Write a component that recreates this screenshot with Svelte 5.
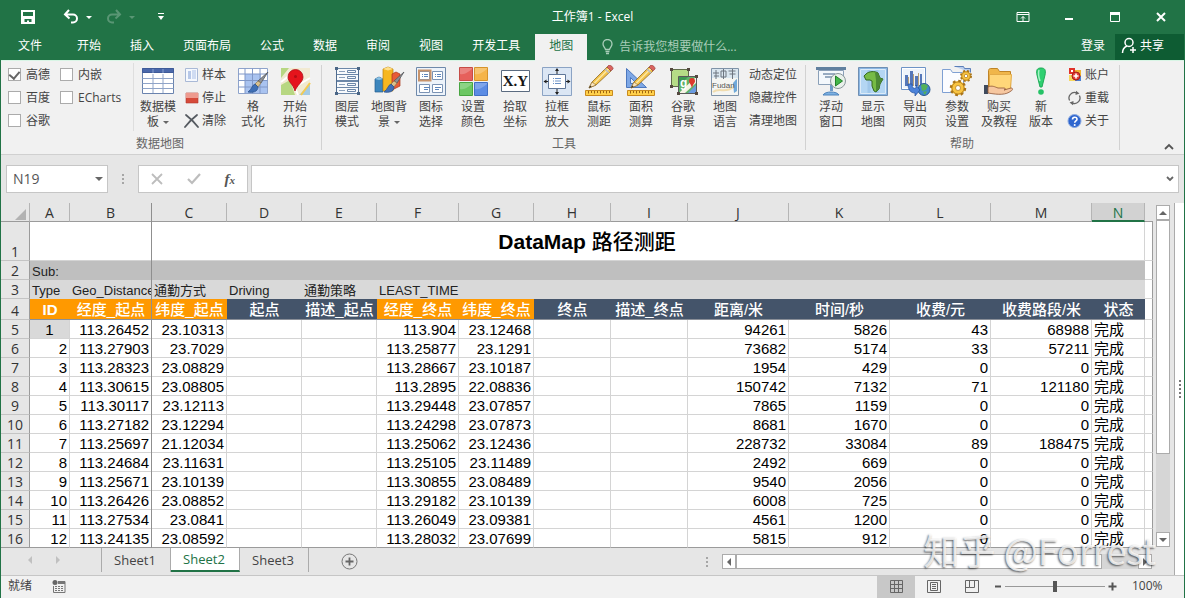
<script>
  const tabs = ['开始', '插入', '页面布局', '公式', '数据', '审阅', '视图', '开发工具', '地图'];
  let activeTab = $state('地图');
  let activeSheet = $state('Sheet2');
  let zoom = $state(100);

  const providers = [
    { name: '高德', on: true },
    { name: '内嵌', on: false },
    { name: '百度', on: false },
    { name: 'ECharts', on: false },
    { name: '谷歌', on: false }
  ];

  const toolButtons = [
    { icon: 'layers', lines: ['图层', '模式'] },
    { icon: 'chartBrush', lines: ['地图背', '景'], menu: true },
    { icon: 'iconPick', lines: ['图标', '选择'] },
    { icon: 'colors', lines: ['设置', '颜色'] },
    { icon: 'xy', lines: ['拾取', '坐标'] },
    { icon: 'frame', lines: ['拉框', '放大'] },
    { icon: 'measure', lines: ['鼠标', '测距'] },
    { icon: 'area', lines: ['面积', '测算'] },
    { icon: 'google', lines: ['谷歌', '背景'] },
    { icon: 'lang', lines: ['地图', '语言'] }
  ];

  const helpButtons = [
    { icon: 'screen', lines: ['浮动', '窗口'] },
    { icon: 'africa', lines: ['显示', '地图'] },
    { icon: 'exportWeb', lines: ['导出', '网页'] },
    { icon: 'gears', lines: ['参数', '设置'] },
    { icon: 'buy', lines: ['购买', '及教程'] },
    { icon: 'news', lines: ['新', '版本'] }
  ];

  const dataSmall = [
    { icon: 'sample', label: '样本' },
    { icon: 'stop', label: '停止' },
    { icon: 'clear', label: '清除' }
  ];
  const helpSmall = [
    { icon: 'account', label: '账户' },
    { icon: 'reload', label: '重载' },
    { icon: 'about', label: '关于' }
  ];

  const columns = [
    ['A', 40], ['B', 82], ['C', 75], ['D', 75], ['E', 75], ['F', 82], ['G', 75],
    ['H', 77], ['I', 77], ['J', 101], ['K', 101], ['L', 101], ['M', 101], ['N', 53]
  ];

  const params = ['Type', 'Geo_Distance', '通勤方式', 'Driving', '通勤策略'];

  const fields = [
    ['ID', 'key id'], ['经度_起点', 'key'], ['纬度_起点', 'key'], ['起点', ''], ['描述_起点', ''],
    ['经度_终点', 'key'], ['纬度_终点', 'key'], ['终点', ''], ['描述_终点', ''],
    ['距离/米', ''], ['时间/秒', ''], ['收费/元', ''], ['收费路段/米', ''], ['状态', '']
  ];

  const rows = [
    [1, '113.26452', '23.10313', '113.904', '23.12468', 94261, 5826, 43, 68988],
    [2, '113.27903', '23.7029', '113.25877', '23.1291', 73682, 5174, 33, 57211],
    [3, '113.28323', '23.08829', '113.28667', '23.10187', 1954, 429, 0, 0],
    [4, '113.30615', '23.08805', '113.2895', '22.08836', 150742, 7132, 71, 121180],
    [5, '113.30117', '23.12113', '113.29448', '23.07857', 7865, 1159, 0, 0],
    [6, '113.27182', '23.12294', '113.24298', '23.07873', 8681, 1670, 0, 0],
    [7, '113.25697', '21.12034', '113.25062', '23.12436', 228732, 33084, 89, 188475],
    [8, '113.24684', '23.11631', '113.25105', '23.11489', 2492, 669, 0, 0],
    [9, '113.25671', '23.10139', '113.30855', '23.08489', 9540, 2056, 0, 0],
    [10, '113.26426', '23.08852', '113.29182', '23.10139', 6008, 725, 0, 0],
    [11, '113.27534', '23.0841', '113.26049', '23.09381', 4561, 1200, 0, 0],
    [12, '113.24135', '23.08592', '113.28032', '23.07699', 5815, 912, 0, 0]
  ];

  const brush = `<path d="M31 7 24 18l-3-2z" fill="#8d9095" stroke="#55585c" stroke-width=".8"/><path d="m24 18-3-2-3 3 3 3z" fill="#d9c08c" stroke="#7c6a44" stroke-width=".6"/><path d="M18 19c-3 1-3 5-7 8 4 1 10 0 10-5z" fill="#3f6fb5" stroke="#274d86" stroke-width=".7"/>`;
  const pencil = `<path d="M6 23 9 17 24 2l4 4L13 20z" fill="#f3c34a" stroke="#8f6a24" stroke-width=".8"/><path d="m11 18.500 15-15" stroke="#fbe7a4" stroke-width="1.500"/><path d="m24 2 4 4 2-2c1-1-3-5-4-4z" fill="#d9645f" stroke="#8e3b38" stroke-width=".6"/><path d="m22 4 4 4" stroke="#b9bcc4" stroke-width="1.500"/><path d="m6 23 3-6 4 3z" fill="#f7e3bf" stroke="#8f6a24" stroke-width=".6"/><path d="m6 23 1.200-2.500 1.500 1.200z" fill="#333"/>`;
  const ruler = `<path d="M2.500 25.500h27v5h-27z" fill="#ffd04a" stroke="#c98a1d"/><path d="M5.500 26v2.500m3-2.500v2m3-2v2.500m3-2.500v2m3-2v2.500m3-2.500v2m3-2v2.500m3-2.500v2" stroke="#9c6412"/>`;

  const icons = {
    table: `<path d="M.5 3.500h31v25H.5z" fill="#fff" stroke="#6a83ae"/><path d="M.5 3.500h31v4H.5z" fill="#4a68ab" stroke="#3f5b98"/><path d="M.5 13.500h31M.5 18.500h31M.5 23.500h31M11 9v19M21 9v19" stroke="#8fa4c8"/><path d="M11 4v4M21 4v4" stroke="#8aa2d2"/>`,
    gridBrush: `<path d="M1.500 3.500h29v25h-29z" fill="#fff" stroke="#8ea3cb"/><path d="M8 9h16v6h6v13H8z" fill="#a9c3f0"/><path d="M1.500 9h29M1.500 15.500h29M1.500 22h29M8 3.500v25M15.500 3.500v25M23 3.500v25" stroke="#8098c8"/>${brush}`,
    pin: `<path d="M2 3h29v27H2z" fill="#f1ead2"/><path d="M2 3h8L2 13zM2 20l9-5 5 15H2z" fill="#b7d782"/><path d="M20 30 31 19v11z" fill="#a5cbe4"/><path d="m2 17 9-7 8 20m-3-8 15-9" fill="none" stroke="#fff" stroke-width="2"/><path d="m22 30 9-12" stroke="#f4cb52" stroke-width="2"/><path d="M16 26c-2-7-7-9-7-14a7.500 7.500 0 0 1 15 0c0 5-6 8-8 14z" fill="#e5141c" stroke="#b00c13" stroke-width=".8"/><circle cx="16.500" cy="11.500" r="1.500" fill="#b40d14"/>`,
    layers: `<g fill="#f8fafc" stroke="#6c87a8"><path d="M5.500 3.500h22v6h-22zM5.500 9.500h22v6h-22zM5.500 16.500h22v6h-22zM5.500 22.500h22v6h-22z"/><path d="M16.500 5.500h8v2h-8zM16.500 11.500h8v2h-8zM16.500 18.500h8v2h-8zM16.500 24.500h8v2h-8z"/></g><path d="M5.500 3v26m22-26v26" stroke="#4f6c8f"/><path d="M8 6.500h6m-6 6h6m-6 7h6m-6 6h6" stroke="#8ba0bb"/><path d="M4 2h3v3H4zM26 2h3v3h-3zM4 27h3v3H4zM26 27h3v3h-3z" fill="#4a6585"/>`,
    chartBrush: `<path d="m2 14 4-2 4 2v13H2z" fill="#3c86bd" stroke="#235c8c" stroke-width=".7"/><path d="m2 14 4 1 4-1-4-2z" fill="#8cc3e4"/><path d="m10 4 5-2 5 2v22H10z" fill="#f6b720" stroke="#b9800e" stroke-width=".7"/><path d="m10 4 5 1.500L20 4l-5-2z" fill="#ffe08b"/><path d="m19 9 4-2 4 2v12l-8 4z" fill="#e75b38" stroke="#a83519" stroke-width=".7"/>${brush}`,
    iconPick: `<path d="M1.500 2.500h29v28h-29z" fill="#edf3fa" stroke="#6f89aa"/><g fill="#fff" stroke="#7b93b4"><path d="M4.500 6.500h10v8h-10zM17.500 6.500h10v8h-10zM4.500 19.500h10v8h-10zM17.500 19.500h10v8h-10z"/></g><path d="M4 5.500h11.500v10H4z" fill="none" stroke="#c7936b" stroke-width="2"/><path d="M7 9.500h1m1 0h4m-6 2h1m1 0h4m7-2h1m1 0h4m-6 2h1m1 0h4m-17 11h6m-6 2h4m7-2h6m-6 2h4" stroke="#5d86bd"/>`,
    colors: `<path d="M2.500 2.500h13v13h-13z" fill="#e6605b" stroke="#c64c47"/><path d="M17.500 2.500h13v13h-13z" fill="#f5b44a" stroke="#d6932c"/><path d="M2.500 17.500h13v13h-13z" fill="#6cc763" stroke="#48a541"/><path d="M17.500 17.500h13v13h-13z" fill="#5c8ce4" stroke="#416fc4"/><path d="M3 9c5 1 8-2 12-5V3H3zM18 9c5 1 8-2 12-5V3H18zM3 24c5 1 8-2 12-5v-1H3zM18 24c5 1 8-2 12-5v-1H18z" fill="#fff" opacity=".22"/>`,
    xy: `<path d="M2.500 5.500h28v21h-28z" fill="#fff" stroke="#5b6b80"/><text x="16.500" y="21" text-anchor="middle" font-family="Liberation Serif, serif" font-weight="700" font-size="15" fill="#151515">X.Y</text>`,
    frame: `<path d="M1.500 2.500h29v28h-29z" fill="#dbe6f4" stroke="#8ba3c4"/><path d="M7.500 9.500h17v14h-17z" fill="#fff" stroke="#5f7799"/><path d="M12 13.500h1m1 0h6m-8 2.500h1m1 0h6m-8 2.500h1m1 0h6" stroke="#6b92c7"/><path d="M16 4v5M16 24v5M3 16.500h4M25 16.500h4" stroke="#222"/><path d="m16 3-2 3h4zM16 30l-2-3h4zM2.500 16.500l3-2v4zM29.500 16.500l-3-2v4z" fill="#222"/>`,
    measure: pencil + ruler,
    area: `<path d="M1.500 3.500v19h20z" fill="#7ea8e6" stroke="#4c78bf"/><path d="M5.500 12.500v6h6z" fill="#dce8fa" stroke="#4c78bf"/>${pencil}${ruler}`,
    google: `<path d="M4.500 4.500h17v17h-17z" fill="#b5dc86" stroke="#5f6b4a"/><path d="M11.500 11.500h18v17h-18z" fill="#5fb36a" stroke="#5a5a5a"/><path d="M12 12h9l-9 9z" fill="#3d9a52"/><path d="m12 28 17-16v6L18 28z" fill="#f6f3e6"/><path d="m21 28 8-8v8z" fill="#6b9be0"/><text x="13" y="22" font-family="Liberation Sans, sans-serif" font-weight="700" font-size="12" fill="#fff">g</text><path d="M25 23c-1-4-3-5-3-7a3 3 0 0 1 6 0c0 2-2 3-3 7z" fill="#dc3a2c"/><path d="M3 3h3v3H3zM20 3h3v3h-3zM3 20h3v3H3zM10 27h3v3h-3zM28 10h3v3h-3zM28 27h3v3h-3z" fill="#54483f"/>`,
    lang: `<path d="M2.500 3.500h27v27h-27z" fill="#f4f5f2" stroke="#7f93a8"/><path d="M3 4h26v9H3z" fill="#d9e6ef"/><path d="M4 8h6m-3-3v9M5 11h5m2-5h5v6h-5zm2.500-2v10m5-8h7m-3-2v10m-3-5h6" fill="none" stroke="#6d757f"/><path d="M24 18c2-2 2-3 4-4v12l-3 2z" fill="#6fa9d8"/><path d="M4 27c6-5 13 2 20-5" stroke="#f0dcae" stroke-width="2" fill="none"/><text x="3" y="23" font-family="Liberation Sans, sans-serif" font-size="8" fill="#555">Fudan</text>`,
    screen: `<path d="M1 2h30v3H1z" fill="#61809f"/><path d="M3.500 5.500h25v14h-25z" fill="#f4f8fc" stroke="#8ba0b8"/><path d="M8 9h12M10 12h8" stroke="#7a91ad" stroke-width="1.500"/><path d="M15 20h3v6h-3z" fill="#6e9ac8"/><path d="M8 30c2-4 14-4 16 0z" fill="#7db1e3" stroke="#4c82bb"/><circle cx="23" cy="16" r="7.500" fill="#e9f0ea" stroke="#8a979c"/><path d="m20.500 11 7 5-7 5z" fill="#43b649" stroke="#23822a"/>`,
    africa: `<path d="M1.500 2.500h29v28h-29z" fill="#8ab6e3" stroke="#6f8fb3" /><path d="M3.500 4.500h25v24h-25z" fill="#b4d6f3" stroke="#dcebf8"/><path d="M12 5v23M20 5v23" stroke="#8dbae2" stroke-width="3" opacity=".5"/><path d="M9 9c3-3 9-3 12-1l2 5 3 1-3 5-1 5-3 3-2-1-2-5v-5l-2-1-4 0-2-4z" fill="#76bb45" stroke="#33661f"/><path d="M18 8l3 0 2 5 3 1-3 5-1 5-3 3V15z" fill="#4c8a35"/>`,
    exportWeb: `<path d="M2.500 2.500h24v22h-24z" fill="#fff" stroke="#6e93c6"/><path d="M4 4h21v19H4z" fill="#eef4fb"/><path d="M6 10h3v11H6zM11 6h3v15h-3zM16 11h3v10h-3zM21 9h2v12h-2z" fill="#5577b8"/><path d="M9 12h1v9H9zM14 9h1v12h-1zM19 8h1v13h-1z" fill="#b9a178"/><circle cx="25" cy="24.500" r="6" fill="#3f87cf" stroke="#28598f"/><path d="M22 20c3-2 5-1 7 1l-2 4-4 1zM24 27l4-1-2 4z" fill="#54b158"/><path d="M9 19h4c0 4 2 5 4 4v-3l4 5-5 6v-3c-5 0-7-4-7-9z" fill="#4c82d9" stroke="#234f9c" stroke-width=".7"/>`,
    gears: `<path d="M1.500 4.500h8l2 3h11v20h-21z" fill="#fbfcff" stroke="#7fa0d3"/><path d="M13.500 1.500h9l1 2h6v4" fill="#b9cdec" stroke="#5b7fb9"/><g fill="#f9c440" stroke="#a9741a"><circle cx="25" cy="11" r="5" stroke-width="2" stroke-dasharray="2 2"/><circle cx="25" cy="11" r="4.200" stroke-width=".7"/><circle cx="25" cy="11" r="1.700" fill="#fff" stroke-width=".7"/><circle cx="17" cy="23" r="7" stroke-width="2.500" stroke-dasharray="2.750 2.750"/><circle cx="17" cy="23" r="6" stroke-width=".7"/><circle cx="17" cy="23" r="2.500" fill="#fff" stroke-width=".7"/></g>`,
    buy: `<path d="M5.500 5.500c0-1 1-2 2-2h7l2 3h11v18h-22z" fill="#f0b64a" stroke="#bf8427"/><path d="M6.500 9.500h22l-1 15h-21z" fill="#ffd679" stroke="#e3ab48"/><path d="M1 20h4v9H1z" fill="#3e4a5d"/><path d="M5 22c4-2 7 0 10 1h6c2 0 2 2 0 2l7-2c2 0 2 2 0 3-5 4-12 4-23 2z" fill="#f6c7a0" stroke="#8e5636" stroke-width=".8"/>`,
    news: `<path d="M16 3c4 0 5 2 4 7l-3 12h-2l-3-12c-1-5 0-7 4-7z" fill="#2fd071" stroke="#1faa57"/><path d="M14 5c-1 3 0 8 1 11" stroke="#a5f2c5" fill="none" stroke-width="1.500"/><circle cx="16" cy="27" r="2.800" fill="#25c266"/>`,
    sample: `<path d="M1.500 1.500h12v13h-12z" fill="#f6f9fe" stroke="#a9b9d6"/><path d="M4 4h3v8H4z" fill="#b7c8e8"/><path d="M8 3h4v9H8z" fill="#d0dcf2"/>`,
    stop: `<path d="M2 3h12v10H2z" fill="#d64a3a" stroke="#b1382b" stroke-width=".6"/><path d="M2 3h12v5H2z" fill="#ee9a8e"/>`,
    clear: `<path d="M2 2c4 3 8 7 12 12M13 2C9 5 5 9 1 14" fill="none" stroke="#555a60" stroke-width="1.800" stroke-linecap="round"/>`,
    account: `<path d="M2 1h6v6H2z" fill="#e0322a"/><path d="M8 3h6v6H8z" fill="#f0b432"/><path d="M2 8h6v6H2z" fill="#f7d65c"/><path d="M8 9h6v5H8z" fill="#4b7fd0"/><circle cx="9" cy="9" r="4" fill="#e2413a" stroke="#a91e18"/><path d="M9 6.500v5M6.500 9h5" stroke="#fff" stroke-width="1.600"/><path d="M4 3h2v2H4z" fill="#fff"/>`,
    reload: `<path d="M2.600 10.500A5.500 5.500 0 0 1 9.500 2.900M12.400 5.500A5.500 5.500 0 0 1 5.500 13.100" fill="none" stroke="#666" stroke-width="1.300"/><path d="m9 .8 3.500 2.700L8.500 5zM6 15.200l-3.500-2.700L6.500 11z" fill="#666"/>`,
    about: `<circle cx="7.500" cy="8" r="6.500" fill="#2f66cf" stroke="#8aa9e0"/><path d="M5.500 6.500c0-3 4.500-3 4.500-.3 0 1.800-2.300 1.700-2.300 3.600" fill="none" stroke="#fff" stroke-width="1.600"/><circle cx="7.700" cy="12" r="1" fill="#fff"/>`
  };
</script>

{#snippet big(b)}
  <button class="big">
    <svg class="i32" viewBox="0 0 32 32" aria-hidden="true">{@html icons[b.icon]}</svg>
    <span>{b.lines[0]}</span>
    <span>{b.lines[1]}{#if b.menu}<i class="caret"></i>{/if}</span>
  </button>
{/snippet}

{#snippet small(b)}
  <button class="small">
    <svg class="i15" viewBox="0 0 15 16" aria-hidden="true">{@html icons[b.icon]}</svg>
    <span>{b.label}</span>
  </button>
{/snippet}

<div class="window">
  <header class="title">
    <div class="quick">
      <button aria-label="保存"><svg width="16" height="16" viewBox="0 0 16 16"><path d="M2 2h12v12H2z" fill="none" stroke="#fff" stroke-width="2"/><path d="M2 7h12v3H2zM3 10h1.500v4H3zM11.500 10H13v4h-1.500zM7 11.500h2V14H7z" fill="#fff"/></svg></button>
      <button class="undo" aria-label="撤消"><svg width="16" height="16" viewBox="0 0 16 16"><path d="M2 5.500h8a4 4 0 0 1 0 8H8M6 1 2 5.500 6.500 9.500" fill="none" stroke="#fff" stroke-width="2"/></svg><i class="caret light"></i></button>
      <button class="undo dim" aria-label="恢复"><svg width="16" height="16" viewBox="0 0 16 16"><path d="M14 5.500H6a4 4 0 0 0 0 8h2M10 1l4 4.500-4.500 4" fill="none" stroke="#fff" stroke-width="2"/></svg><i class="caret light"></i></button>
      <button class="custom" aria-label="自定义"><svg width="8" height="10" viewBox="0 0 8 10"><path d="M1 1.500h6" stroke="#fff"/><path d="M1 4h6L4 8z" fill="#fff"/></svg></button>
    </div>
    <h1>工作簿1 - Excel</h1>
    <div class="controls">
      <button aria-label="功能区显示选项"><svg width="14" height="12" viewBox="0 0 14 12"><path d="M1 1.500h12v9H1zM1 3.500h12M7 10V5.500M5 7.500l2-2 2 2" fill="none" stroke="#fff"/></svg></button>
      <button aria-label="最小化"><svg width="14" height="12" viewBox="0 0 14 12"><path d="M3 8h8" stroke="#fff" stroke-width="2"/></svg></button>
      <button aria-label="最大化"><svg width="14" height="12" viewBox="0 0 14 12"><path d="M2.500 1.500h9v9h-9z" fill="none" stroke="#fff"/><path d="M2 1h10v3H2z" fill="#fff"/></svg></button>
      <button aria-label="关闭"><svg width="14" height="12" viewBox="0 0 14 12"><path d="m3 2 8 8m0-8-8 8" stroke="#fff" stroke-width="2"/></svg></button>
    </div>
  </header>

  <nav class="tabs">
    <button class="file">文件</button>
    {#each tabs as tab}
      <button class:active={tab === activeTab} onclick={() => (activeTab = tab)}>{tab}</button>
    {/each}
    <button class="tell"><svg width="11" height="16" viewBox="0 0 11 16"><path d="M3.500 10.500C3 8.500 1 7.500 1 5a4.500 4.500 0 0 1 9 0c0 2.500-2 3.500-2.500 5.500z" fill="none" stroke="#a9cdb9" stroke-width="1.300"/><path d="M3.500 12.500h4M4 14.500h3" stroke="#a9cdb9" stroke-width="1.500"/></svg>告诉我您想要做什么...</button>
    <a class="login" href="#login">登录</a>
    <button class="share"><svg width="16" height="17" viewBox="0 0 16 17"><circle cx="8" cy="5.500" r="4" fill="none" stroke="#fff" stroke-width="1.500"/><path d="M1.500 16c0-4 2-6 4.500-7M12 10v6M9 13h6" fill="none" stroke="#fff" stroke-width="1.500"/></svg>共享</button>
  </nav>

  <section class="ribbon">
    <div class="group data">
      <div class="tools">
        <div class="checks">
          {#each providers as p}
            <label><input type="checkbox" checked={p.on} />{p.name}</label>
          {/each}
        </div>
        {@render big({ icon: 'table', lines: ['数据模', '板'], menu: true })}
        <div class="stack">{#each dataSmall as s}{@render small(s)}{/each}</div>
        {@render big({ icon: 'gridBrush', lines: ['格', '式化'] })}
        {@render big({ icon: 'pin', lines: ['开始', '执行'] })}
      </div>
      <div class="caption">数据地图</div>
    </div>
    <div class="group">
      <div class="tools">
        {#each toolButtons as b}{@render big(b)}{/each}
        <div class="stack plain">
          <button class="small">动态定位</button>
          <button class="small">隐藏控件</button>
          <button class="small">清理地图</button>
        </div>
      </div>
      <div class="caption">工具</div>
    </div>
    <div class="group help">
      <div class="tools">
        {#each helpButtons as b}{@render big(b)}{/each}
        <div class="stack">{#each helpSmall as s}{@render small(s)}{/each}</div>
      </div>
      <div class="caption">帮助</div>
    </div>
    <button class="collapse" aria-label="折叠功能区"><svg width="10" height="7" viewBox="0 0 10 7"><path d="m1 6 4-4 4 4" fill="none" stroke="#555" stroke-width="1.800"/></svg></button>
  </section>

  <section class="formula">
    <div class="namebox">
      <input aria-label="名称框" value="N19" />
      <button aria-label="名称列表"><i class="caret wide"></i></button>
    </div>
    <span class="grip"></span>
    <div class="fx">
      <button aria-label="取消"><svg width="12" height="12" viewBox="0 0 12 12"><path d="m1 1 10 10M11 1 1 11" stroke="#bdbdbd" stroke-width="1.800"/></svg></button>
      <button aria-label="输入"><svg width="14" height="12" viewBox="0 0 14 12"><path d="m1 6 4 4 8-9" fill="none" stroke="#bdbdbd" stroke-width="2.200"/></svg></button>
      <button class="fn" aria-label="插入函数">f<small>x</small></button>
    </div>
    <div class="entry">
      <input aria-label="编辑栏" />
      <button aria-label="展开编辑栏"><svg width="8" height="6" viewBox="0 0 8 6"><path d="m1 1 3 3 3-3" fill="none" stroke="#666" stroke-width="1.800"/></svg></button>
    </div>
  </section>

  <main class="work">
    <div class="book">
      <div class="view">
        <div class="sheet">
          <table>
            <colgroup>
              <col style="width:29px" />
              {#each columns as c}<col style="width:{c[1]}px" />{/each}
              <col />
            </colgroup>
            <thead>
              <tr>
                <th class="corner"><svg width="11" height="11" viewBox="0 0 11 11"><path d="M11 0v11H0z" fill="#b2b2b2"/></svg></th>
                {#each columns as c}<th class:selected={c[0] === 'N'}>{c[0]}</th>{/each}
                <th></th>
              </tr>
            </thead>
            <tbody>
              <tr class="heading"><th>1</th><td colspan="14"><b>DataMap</b> 路径测距</td><td></td></tr>
              <tr class="sub"><th>2</th><td colspan="14">Sub:</td><td></td></tr>
              <tr class="params"><th>3</th>{#each params as p}<td>{p}</td>{/each}<td colspan="9">LEAST_TIME</td><td></td></tr>
              <tr class="fields"><th>4</th>{#each fields as f}<td class={f[1]}>{f[0]}</td>{/each}<td></td></tr>
              {#each rows as r, i}
                <tr>
                  <th>{i + 5}</th>
                  <td class:first={i === 0}>{r[0]}</td><td>{r[1]}</td><td>{r[2]}</td><td></td><td></td>
                  <td>{r[3]}</td><td>{r[4]}</td><td></td><td></td>
                  <td>{r[5]}</td><td>{r[6]}</td><td>{r[7]}</td><td>{r[8]}</td><td class="state">完成</td><td></td>
                </tr>
              {/each}
            </tbody>
          </table>
          <span class="freeze"></span>
        </div>
        <div class="vscroll">
          <button aria-label="向上"><i class="up"></i></button>
          <div class="vtrack"><div class="vthumb"></div></div>
          <button aria-label="向下"><i class="down"></i></button>
        </div>
      </div>
      <div class="sheets">
        <div class="move"><i class="left"></i><i class="right"></i></div>
        {#each ['Sheet1', 'Sheet2', 'Sheet3'] as s}
          <button class="stab" class:on={s === activeSheet} onclick={() => (activeSheet = s)}>{s}</button>
        {/each}
        <button class="add" aria-label="新工作表"><svg width="17" height="17" viewBox="0 0 17 17"><circle cx="8.500" cy="8.500" r="7.500" fill="none" stroke="#777"/><path d="M8.500 4.500v8M4.500 8.500h8" stroke="#666" stroke-width="1.800"/></svg></button>
        <span class="grip"></span>
        <div class="hscroll">
          <button aria-label="向左"><i class="left"></i></button>
          <div class="htrack"><div class="hthumb"></div></div>
          <button aria-label="向右"><i class="right"></i></button>
        </div>
      </div>
      <div class="watermark">知乎 @Forrest</div>
    </div>
    <aside class="pane"><span class="dots"></span></aside>
  </main>

  <footer class="status">
    <span class="ready">就绪</span>
    <svg width="14" height="13" viewBox="0 0 14 13"><circle cx="3" cy="2.500" r="2.500" fill="#666"/><path d="M6 1.500h7v11H1.500V6M7 3h6" fill="none" stroke="#777"/><path d="M6 1h7v3H6z" fill="#777"/><path d="M3 6.500h9M3 8.500h9M3 10.500h9" stroke="#777" stroke-dasharray="2 1"/></svg>
    <div class="views">
      <button class="on" aria-label="普通"><svg width="13" height="13" viewBox="0 0 13 13"><path d="M.5.5h12v12H.5zM4.500.5v12M8.500.5v12M.5 4.500h12M.5 8.500h12" fill="none" stroke="#666"/></svg></button>
      <button aria-label="页面布局"><svg width="14" height="13" viewBox="0 0 14 13"><path d="M.5.5h13v12H.5zM3.500 2.500h7v8h-7zM5 4.500h4M5 6.500h4M5 8.500h4" fill="none" stroke="#666"/></svg></button>
      <button aria-label="分页预览"><svg width="14" height="13" viewBox="0 0 14 13"><path d="M.5.5h13v12H.5zM4.500.5v7h5v-7M.5 7.500h4" fill="none" stroke="#666"/></svg></button>
    </div>
    <button class="step" aria-label="缩小"><svg width="8" height="9" viewBox="0 0 8 9"><path d="M1 4.500h6" stroke="#555" stroke-width="2"/></svg></button>
    <input class="zoom" type="range" min="0" max="200" bind:value={zoom} aria-label="缩放" />
    <button class="step" aria-label="放大"><svg width="9" height="9" viewBox="0 0 9 9"><path d="M.5 4.500h8M4.500.5v8" stroke="#555" stroke-width="2"/></svg></button>
    <span class="pct">{zoom}%</span>
  </footer>
</div>

<style>
  .window, .window * { box-sizing: border-box; }
  .window {
    display: flex;
    flex-direction: column;
    min-height: 100vh;
    border: 1px solid #217346;
    border-top: 0;
    background: #e6e6e6;
    color: #444;
    font: 12px/16px "Open Sans", "Noto Sans CJK SC", sans-serif;
    overflow: hidden;
  }
  button, input {
    margin: 0;
    padding: 0;
    border: 0;
    background: none;
    color: inherit;
    font: inherit;
  }
  svg { display: block; flex: none; }
  .caret {
    display: inline-block;
    border: 3px solid transparent;
    border-top-color: #666;
    border-bottom: 0;
    margin-left: 4px;
    vertical-align: middle;
  }
  .caret.light { border-top-color: #fff; margin-left: 7px; }
  .caret.wide { border-width: 4px 4px 0; margin: 0; }

  .title {
    display: grid;
    grid-template-columns: 1fr auto 1fr;
    align-items: center;
    height: 34px;
    background: #217346;
    color: #fff;
  }
  .quick { display: flex; align-items: center; padding-left: 19px; }
  .quick button { display: flex; align-items: center; }
  .quick .undo { margin-left: 27px; }
  .quick .undo.dim { margin-left: 14px; opacity: .25; }
  .quick .custom { margin-left: 22px; }
  h1 { margin: 0; font-size: 12px; font-weight: 400; }
  .controls { display: flex; justify-content: flex-end; }
  .controls button { display: grid; place-items: center; width: 46px; height: 32px; }

  .tabs { display: flex; align-items: stretch; height: 26px; background: #217346; color: #fff; }
  .tabs button { padding: 0 14px 2px; margin-right: 1px; white-space: nowrap; }
  .tabs .file { padding: 0 17px 2px; margin-right: 4px; }
  .tabs .active { background: #f1f1f1; color: #217346; margin-bottom: -1px; padding-bottom: 3px; position: relative; }
  .tabs .tell { display: flex; align-items: center; gap: 6px; color: #a9cdb9; padding-bottom: 0; }
  .tabs .login { margin-left: auto; padding: 4px 10px; color: inherit; text-decoration: none; }
  .tabs .share { display: flex; align-items: center; gap: 3px; margin: 0; padding: 0 20px 3px 6px; background: #0e5c33; }

  .ribbon {
    display: flex;
    background: #f1f1f1;
    border-top: 1px solid #d8f5e5;
    border-bottom: 1px solid #d0d0d0;
    padding-bottom: 2px;
  }
  .group { position: relative; display: flex; flex-direction: column; padding: 4px 4px 0 4px; }
  .group.data { padding: 4px 6px 0 3px; }
  .group.help { padding-right: 6px; }
  .group::after { content: ""; position: absolute; right: 0; top: 4px; bottom: 2px; border-right: 1px solid #d2d2d2; }
  .tools { display: flex; align-items: flex-start; height: 70px; }
  .caption { text-align: center; line-height: 17px; color: #666; }
  .checks {
    display: grid;
    grid-template-columns: 52px 70px;
    grid-auto-rows: 23px;
    align-content: start;
    margin: -2px 3px 0 4px;
    height: 68px;
    border-right: 1px solid #dedede;
    padding-right: 3px;
  }
  .checks label { display: flex; align-items: center; gap: 5px; white-space: nowrap; }
  .checks input {
    appearance: none;
    display: grid;
    place-items: center;
    flex: none;
    width: 13px;
    height: 13px;
    border: 1px solid #ababab;
    background: #fff;
  }
  .checks input:checked::before {
    content: "";
    width: 5px;
    height: 8px;
    border: solid #666;
    border-width: 0 2px 2px 0;
    transform: translateY(-1px) rotate(40deg);
  }
  .big {
    display: flex;
    flex-direction: column;
    align-items: center;
    width: 42px;
    line-height: 15px;
    white-space: nowrap;
  }
  .i32 { width: 32px; height: 32px; margin-bottom: 2px; }
  .i15 { width: 15px; height: 16px; }
  .stack { display: flex; flex-direction: column; margin: -2px 5px 0; }
  .data .stack { margin-right: 6px; }
  .stack.plain { margin-left: 3px; }
  .small { display: flex; align-items: center; gap: 3px; height: 23px; white-space: nowrap; }
  .collapse { margin: auto 10px 2px auto; }

  .formula { display: flex; padding: 10px 5px; }
  .namebox, .fx, .entry { display: flex; align-items: center; height: 28px; background: #fff; border: 1px solid #c6c6c6; }
  .namebox { width: 102px; padding: 0 4px 0 6px; font-size: 14px; color: #555; }
  .namebox input { flex: 1; min-width: 0; }
  .namebox button { display: flex; }
  .grip {
    align-self: center;
    width: 2px;
    height: 11px;
    margin: 0 14px;
    background: repeating-linear-gradient(#a6a6a6 0 2px, transparent 2px 4px);
  }
  .fx { width: 110px; justify-content: space-between; padding: 0 12px; }
  .fn { font: italic 700 15px/20px "Liberation Serif", serif; color: #555; }
  .fn small { font-size: 11px; }
  .entry { flex: 1; margin-left: 3px; padding-right: 4px; }
  .entry input { flex: 1; min-width: 0; font-size: 14px; padding: 0 4px; }

  .work { display: flex; flex: 1; }
  .book { position: relative; display: flex; flex-direction: column; flex: 1; min-width: 0; }
  .view { display: flex; }
  .sheet { position: relative; flex: 1; min-width: 0; overflow: hidden; }
  table { width: 100%; table-layout: fixed; border-collapse: separate; border-spacing: 0; }
  th { font-size: 14px; font-weight: 400; line-height: 18px; padding: 0; color: #333; }
  thead th { height: 19px; border-bottom: 1px solid #9b9b9b; border-right: 1px solid #b5b5b5; line-height: 16px; padding-top: 2px; }
  thead th:last-child { border-right: 0; }
  thead .corner svg { margin: 2px 3px 0 auto; }
  thead .selected { background: #d2d2d2; color: #217346; border-bottom: 2px solid #217346; line-height: 15px; }
  tbody th { border-bottom: 1px solid #c4c4c4; border-right: 1px solid #9b9b9b; vertical-align: bottom; line-height: 16px; padding-top: 2px; }
  td {
    height: 19px;
    padding: 2px 2px 0;
    border-right: 1px solid #d4d4d4;
    border-bottom: 1px solid #d4d4d4;
    background: #fff;
    color: #000;
    font: 15px/16px "Liberation Sans", "Noto Sans CJK SC", sans-serif;
    text-align: right;
    white-space: nowrap;
    overflow: hidden;
  }
  td:last-child { border-right-color: #9b9b9b; }
  tbody tr:last-child > * { border-bottom-color: #9b9b9b; }
  .heading td { height: 39px; text-align: center; font-size: 21px; line-height: 30px; font-weight: 500; }
  .sub td:not(:last-child), .params td:not(:last-child) {
    border: 0;
    background: #bfbfbf;
    text-align: left;
    font-size: 13px;
    color: #222;
  }
  .params td:not(:last-child) { background: #d9d9d9; }
  .fields td { height: 21px; text-align: center; font-weight: 500; }
  .fields td.id { font-weight: 700; }
  .fields td:not(:last-child) { padding: 2px 0 0; border-right: 0; border-bottom-color: #8a8f98; background: #44546a; color: #fff; }
  .fields td.key:not(:last-child) { background: #ff9900; }
  td.first { background: #d9d9d9; text-align: center; }
  td.state { text-align: left; }
  .freeze { position: absolute; left: 150px; top: 0; bottom: 0; width: 1px; background: #8f8f8f; }

  .vscroll { display: flex; flex-direction: column; width: 21px; padding: 2px 4px 1px 3px; }
  .vscroll button, .hscroll button { display: grid; place-items: center; flex: none; width: 14px; height: 15px; background: #fff; border: 1px solid #ababab; }
  .vtrack { flex: 1; background: #d6d6d6; }
  .vthumb { height: 75%; background: #fff; border: 1px solid #ababab; }
  .up, .down, .left, .right { border: 4px solid transparent; }
  .up { border-top: 0; border-bottom-color: #666; }
  .down { border-bottom: 0; border-top-color: #666; }
  .left { border-left: 0; border-right-color: #666; }
  .right { border-right: 0; border-left-color: #666; }

  .sheets { display: flex; flex: 1; align-items: flex-start; min-height: 27px; font-size: 13px; }
  .move { display: flex; align-items: center; gap: 24px; width: 101px; height: 24px; padding-left: 27px; border-right: 1px solid #ababab; }
  .move .left { border-right-color: #c0c0c0; }
  .move .right { border-left-color: #c0c0c0; }
  .stab { height: 24px; width: 69px; border-right: 1px solid #ababab; padding: 0 2px 1px 0; }
  .stab.on { background: #fff; color: #217346; border-bottom: 2px solid #217346; padding: 0 2px 0 0; margin-top: -1px; height: 25px; }
  .add { margin: 5px auto 0 32px; }
  .sheets .grip { height: 10px; }
  .hscroll { display: flex; flex: 0 1 430px; margin: 6px 22px 0 0; }
  .htrack { flex: 1; background: #d6d6d6; }
  .hthumb { width: 91%; height: 15px; background: #fff; border: 1px solid #ababab; }
  .pane { display: grid; place-items: center; width: 10px; background: #fff; border-left: 1px solid #ababab; }
  .dots { width: 2px; height: 18px; background: repeating-linear-gradient(#777 0 2px, transparent 2px 4px); }
  .watermark {
    position: absolute;
    right: 18px;
    bottom: 6px;
    font: 36px/40px "Noto Sans CJK SC", sans-serif;
    color: rgba(255, 255, 255, .8);
    text-shadow: -1px 1px 2px rgba(0, 0, 0, .6);
    pointer-events: none;
  }

  .status { display: flex; align-items: center; height: 23px; background: #f1f1f1; border-top: 1px solid #c6c6c6; padding: 0 0 2px 7px; }
  .ready { margin-right: 20px; }
  .views { display: flex; align-self: stretch; margin: 0 0 -2px auto; }
  .views button { display: grid; place-items: center; width: 38px; padding-bottom: 2px; }
  .views .on { background: #c8c8c8; }
  .step { margin-left: 3px; }
  .zoom { appearance: none; width: 100px; height: 15px; margin-left: 3px; background: linear-gradient(#999, #999) center / 100% 1px no-repeat; }
  .zoom::-webkit-slider-thumb { appearance: none; width: 4px; height: 11px; background: #555; }
  .pct { width: 52px; margin: 0 0 0 15px; }
</style>
